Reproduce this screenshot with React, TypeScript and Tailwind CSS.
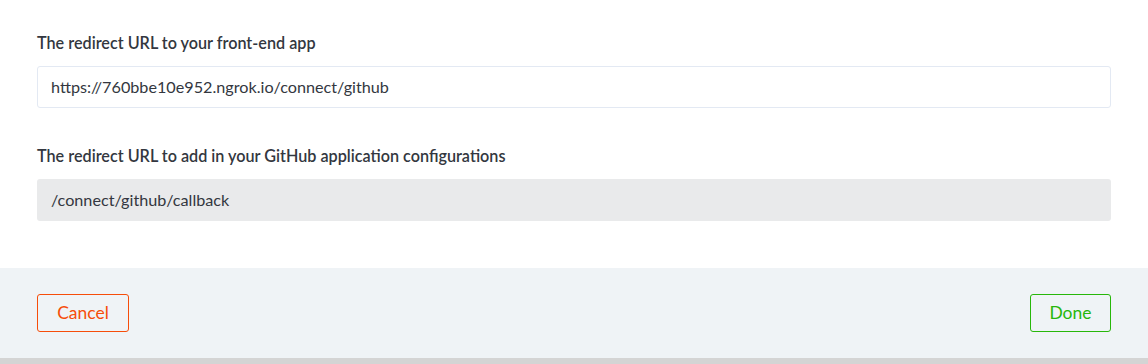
export default function App() {
  return (
    <div className="w-[1148px] h-[364px] bg-[#d4d4d4] font-['Lato','Noto_Sans',sans-serif] text-[#333740]">
      <div className="bg-white px-[37px] pt-[33px] pb-[47px] flex flex-col">
        <label className="text-[16.2px] font-semibold leading-[20px]">The redirect URL to your front-end app</label>
        <div className="mt-[13px] h-[42px] border border-[#e3e9f3] rounded-[3px] px-[13px] flex items-center text-[16.2px]">
          https://760bbe10e952.ngrok.io/connect/github
        </div>
        <label className="mt-[38px] text-[16.2px] font-semibold leading-[20px]">
          The redirect URL to add in your GitHub application configurations
        </label>
        <div className="mt-[13px] h-[42px] bg-[#e9eaeb] rounded-[3px] px-[14px] flex items-center text-[16.2px]">
          /connect/github/callback
        </div>
      </div>
      <div className="h-[90px] bg-[#eff3f6] px-[37px] flex items-center justify-between">
        <button className="h-[38px] w-[92px] border border-[#f64d0a] rounded-[3px] text-[#f64d0a] text-[17.5px]">Cancel</button>
        <button className="h-[38px] w-[81px] border border-[#27b70a] rounded-[3px] text-[#27b70a] text-[17.5px]">Done</button>
      </div>
    </div>
  );
}
